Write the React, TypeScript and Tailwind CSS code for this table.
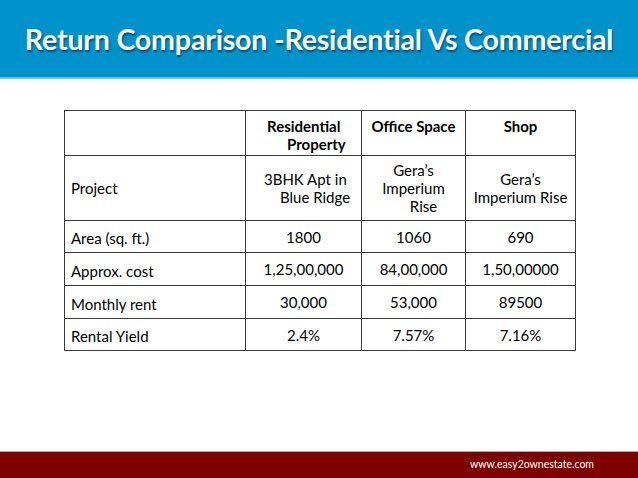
const rows = [
  { label: 'Area (sq. ft.)', values: ['1800', '1060', '690'], h: 'h-[32px]' },
  { label: 'Approx. cost', values: ['1,25,00,000', '84,00,000', '1,50,00000'], h: 'h-[33px]' },
  { label: 'Monthly rent', values: ['30,000', '53,000', '89500'], h: 'h-[33px]' },
  { label: 'Rental Yield', values: ['2.4%', '7.57%', '7.16%'], h: 'h-[32px]' },
];

export default function App() {
  return (
    <div className="w-[638px] h-[478px] bg-white flex flex-col overflow-hidden" style={{ fontFamily: 'Lato, "Open Sans", sans-serif' }}>
      <header className="h-[79px] bg-[#0092cb] flex items-center justify-center border-b-2 border-[#6cc5ea]">
        <h1 className="text-white font-bold text-[28.6px] tracking-[-0.2px] [text-shadow:1px_2px_2px_rgba(0,0,0,0.45)] mt-[1px]">
          Return Comparison -Residential Vs Commercial
        </h1>
      </header>

      <div className="flex-1 pt-[31px] pl-[64px]">
        <table className="border-collapse text-[15px] text-black leading-[18px]">
          <tbody>
            <tr className="h-[45px]">
              <td className="border border-[#3a3a3a] w-[181px]" />
              <td className="border border-[#3a3a3a] w-[116px] align-top pt-[6px] font-bold">
                <div className="pl-[21px]">Residential</div>
                <div className="pl-[41px]">Property</div>
              </td>
              <td className="border border-[#3a3a3a] w-[104px] align-top pt-[6px] font-bold text-center">Office Space</td>
              <td className="border border-[#3a3a3a] w-[110px] align-top pt-[6px] font-bold text-center">Shop</td>
            </tr>
            <tr className="h-[65px]">
              <td className="border border-[#3a3a3a] pl-[6px]">Project</td>
              <td className="border border-[#3a3a3a]">
                <div className="pl-[18px]">3BHK Apt in</div>
                <div className="pl-[34px]">Blue Ridge</div>
              </td>
              <td className="border border-[#3a3a3a] text-center">
                <div>Gera’s</div>
                <div>Imperium</div>
                <div className="pl-[20px]">Rise</div>
              </td>
              <td className="border border-[#3a3a3a] text-center">
                <div>Gera’s</div>
                <div>Imperium Rise</div>
              </td>
            </tr>
            {rows.map((r) => (
              <tr key={r.label} className={r.h}>
                <td className="border border-[#3a3a3a] pl-[6px] pt-[3px]">{r.label}</td>
                {r.values.map((v, i) => (
                  <td key={i} className="border border-[#3a3a3a] text-center">{v}</td>
                ))}
              </tr>
            ))}
          </tbody>
        </table>
      </div>

      <footer className="h-[27px] bg-[#7f0000] border-t border-[#c9a0a0] flex items-center justify-end pr-[44px]">
        <span className="text-white text-[10.5px]">www.easy2ownestate.com</span>
      </footer>
    </div>
  );
}
